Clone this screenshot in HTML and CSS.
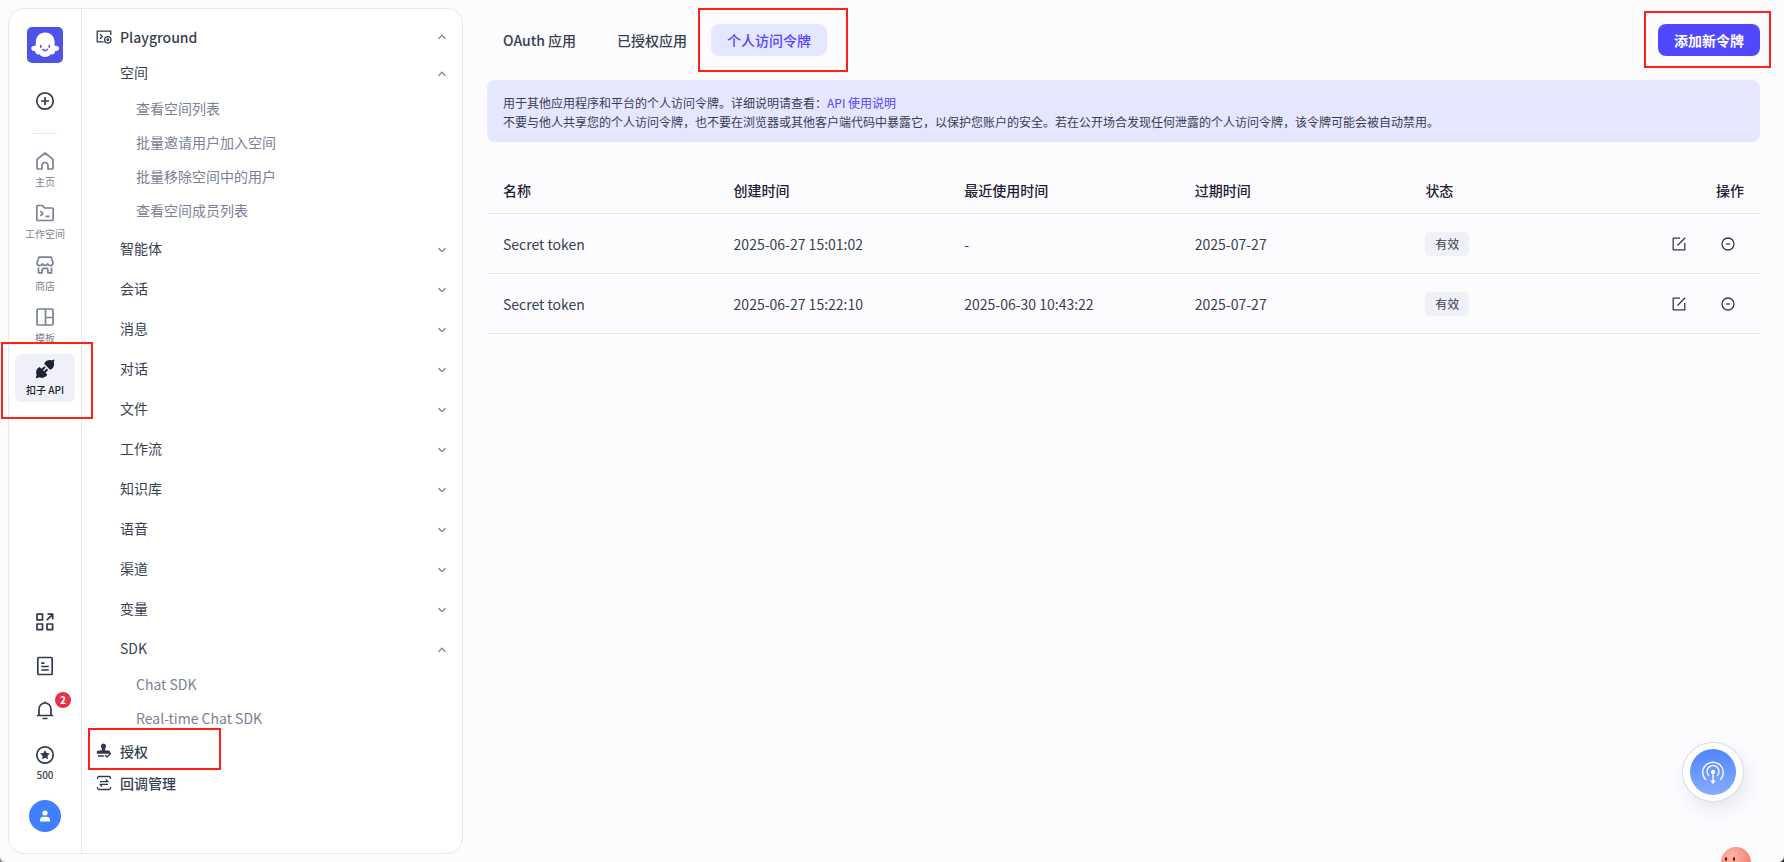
FILE: index.html
```
<!DOCTYPE html>
<html lang="zh-CN">
<head>
    <meta charset="UTF-8">
    <title>扣子 API</title>
    <link rel="stylesheet" href="styles.css">
</head>
<body>
    <svg class="defs" width="0" height="0">
        <symbol id="down" viewBox="0 0 10 10"><path d="M1.500 3.200 5 6.600l3.500-3.400"/></symbol>
        <symbol id="up" viewBox="0 0 10 10"><path d="M1.500 6.800 5 3.200l3.500 3.600"/></symbol>
        <symbol id="edit" viewBox="0 0 16 16"><path d="M9 2.200H2.200v11.600h11.600V7M6.500 9.500l7.700-7.700"/></symbol>
        <symbol id="minus" viewBox="0 0 16 16"><circle cx="8" cy="8" r="6"/><path d="M6 8h4"/></symbol>
    </svg>

    <div class="page">
        <aside class="side">
            <nav class="rail">
                <svg class="logo" viewBox="0 0 36 36">
                    <rect width="36" height="36" rx="5" fill="#4d53e8"/>
                    <path d="M18.200 5.500c-5.400 0-9.400 4-9.400 9.500v3.800c-2.300-.6-4.600.4-4.600 2.400 0 1.900 2 3 4 2.900-.2 2.600 2.200 4.200 4.600 3.200 1 3.700 9.400 3.700 10.600 0 2.400 1 4.900-.6 4.700-3.200 2 .1 4-1 4-2.900 0-2-2.200-3-4.500-2.400V15c0-5.500-4-9.500-9.400-9.500z" fill="#fff"/>
                    <path d="M13.800 18.500v1.700M22.300 18.500v1.700M15.800 22.300c1 1.600 3.500 1.600 4.500 0" fill="none" stroke="#4d53e8" stroke-width="1.500" stroke-linecap="round"/>
                </svg>
                <svg class="icon dark add" viewBox="0 0 20 20"><circle cx="10" cy="10" r="8.200"/><path d="M10 6v8M6 10h8"/></svg>
                <div class="line"></div>

                <div class="nav">
                    <a class="nav-item">
                        <svg class="icon" viewBox="0 0 20 20"><path d="M2 8.300 10 2l8 6.300V17c0 .6-.4 1-1 1h-4v-3.500a3 3 0 0 0-6 0V18H3c-.6 0-1-.4-1-1z"/></svg>
                        <span>主页</span>
                    </a>
                    <a class="nav-item">
                        <svg class="icon" viewBox="0 0 20 20"><path d="M1.800 3.500c0-.6.4-1 1-1h4.700L9.500 5h7.700c.6 0 1 .4 1 1v10.500c0 .6-.4 1-1 1H2.800c-.6 0-1-.4-1-1zM5.300 8.200 8 10.600l-2.700 2.300M10.500 13.300h4"/></svg>
                        <span>工作空间</span>
                    </a>
                    <a class="nav-item">
                        <svg class="icon" viewBox="0 0 20 20"><path d="M4 2.200h12l2 5.300c0 3.800-4.300 4-5.300 1.200-.8 2.300-4.600 2.300-5.400 0C6.300 11.500 2 11.300 2 7.500zM3.500 12.500v5.300h3.600V15c0-1 .7-1.600 1.500-1.600h2.800c.8 0 1.500.6 1.500 1.600v2.800h3.600v-5.300"/></svg>
                        <span>商店</span>
                    </a>
                    <a class="nav-item">
                        <svg class="icon" viewBox="0 0 20 20"><rect x="2" y="2" width="16" height="16" rx="1.200"/><path d="M10.500 2v16M10.500 10.500H18"/></svg>
                        <span>模板</span>
                    </a>
                    <a class="nav-item active">
                        <svg class="icon solid" viewBox="0 0 20 20"><path d="M9.200 4.800c1.600-4 5.800-4.200 7.500-3.400l2.200-.8.500.6-.7 2c1 2.200.3 6.200-3.700 7.600zM4.500 8l2 1.800 2.800-2.600 1.400 1.400-2.700 2.700 1 1 2.700-2.700 1.400 1.400-2.600 2.800 1.800 1.900c-1.800 3-5.800 3.800-8 2.600L1.700 19.300l-1-.8 1.100-2.400C.2 13.300 1.500 9.500 4.500 8z"/></svg>
                        <span>扣子 API</span>
                    </a>
                </div>

                <div class="tools">
                    <svg class="icon dark" viewBox="0 0 20 20"><path d="M2 2.200h5.500v5.600H2zM2 12h5.500v5.600H2zM12 12h5.600v5.600H12zM11.800 8.200l5.500-5.500M12.500 2.200h5.200v5.200"/></svg>
                    <svg class="icon dark" viewBox="0 0 20 20"><rect x="2.800" y="1.500" width="14.400" height="17" rx="1"/><path d="M6.200 7.200h3.300M6.200 10.500h7.600M6.200 14h7.600"/></svg>
                    <div class="bell">
                        <svg class="icon dark" viewBox="0 0 20 20"><path d="M1.800 15.500h16.400M4 15.500V9a6 6 0 0 1 12 0v6.500M10 1.500V3M7.500 18.500h5"/></svg>
                        <span class="badge">2</span>
                    </div>
                    <div class="score">
                        <svg class="icon dark" viewBox="0 0 20 20"><circle cx="10" cy="10" r="8.200"/><path class="fill" d="m10 5 1.500 3 3.400.5-2.500 2.400.6 3.400-3-1.600-3 1.600.6-3.400-2.500-2.400 3.400-.5z"/></svg>
                        <span>500</span>
                    </div>
                    <div class="avatar">
                        <svg viewBox="0 0 12 12" width="12" height="12"><circle cx="6" cy="3" r="2.600"/><path d="M1 11.500V10c0-2 1.300-3.300 3-3.300h4c1.700 0 3 1.300 3 3.300v1.500z"/></svg>
                    </div>
                </div>
            </nav>

            <div class="menu">
                <div class="top first">
                    <svg class="menu-icon" viewBox="0 0 16 16"><path d="M7.500 12.800H1.200V2.200h13.600V6M4 5.200 6.300 7.500 4 9.800"/><circle cx="11.800" cy="10.800" r="3.200"/><circle cx="11.800" cy="10.800" r=".8"/></svg>
                    <span>Playground</span>
                    <svg class="arrow"><use href="#up"/></svg>
                </div>
                <div class="group open"><span>空间</span><svg class="arrow"><use href="#up"/></svg></div>
                <div class="sub">
                    <a>查看空间列表</a>
                    <a>批量邀请用户加入空间</a>
                    <a>批量移除空间中的用户</a>
                    <a>查看空间成员列表</a>
                </div>
                <div class="group"><span>智能体</span><svg class="arrow"><use href="#down"/></svg></div>
                <div class="group"><span>会话</span><svg class="arrow"><use href="#down"/></svg></div>
                <div class="group"><span>消息</span><svg class="arrow"><use href="#down"/></svg></div>
                <div class="group"><span>对话</span><svg class="arrow"><use href="#down"/></svg></div>
                <div class="group"><span>文件</span><svg class="arrow"><use href="#down"/></svg></div>
                <div class="group"><span>工作流</span><svg class="arrow"><use href="#down"/></svg></div>
                <div class="group"><span>知识库</span><svg class="arrow"><use href="#down"/></svg></div>
                <div class="group"><span>语音</span><svg class="arrow"><use href="#down"/></svg></div>
                <div class="group"><span>渠道</span><svg class="arrow"><use href="#down"/></svg></div>
                <div class="group"><span>变量</span><svg class="arrow"><use href="#down"/></svg></div>
                <div class="group open"><span>SDK</span><svg class="arrow"><use href="#up"/></svg></div>
                <div class="sub">
                    <a>Chat SDK</a>
                    <a>Real-time Chat SDK</a>
                </div>
                <div class="top">
                    <svg class="menu-icon" viewBox="0 0 16 16"><path class="fill" d="M7.500.5a2.700 2.700 0 0 1 2 4.400c-.7 1-.5 2 .2 2.600h2.800c1 0 1.800.8 1.800 1.800v1.400H.8V9.300c0-1 .8-1.800 1.800-1.800h2.700c.7-.6.900-1.600.2-2.600a2.700 2.700 0 0 1 2-4.400z"/><path d="M1.800 13h6M9 12l2 2 4-3.800"/></svg>
                    <span>授权</span>
                </div>
                <div class="top">
                    <svg class="menu-icon" viewBox="0 0 16 16"><path d="M1.500 4V3c0-.8.700-1.500 1.500-1.500h10c.8 0 1.500.7 1.500 1.500v1M1.500 12v1c0 .8.700 1.500 1.500 1.500h10c.8 0 1.500-.7 1.500-1.500v-1M4 6.700h8L9.800 4.500M12 9.300H4l2.200 2.200"/></svg>
                    <span>回调管理</span>
                </div>
            </div>
        </aside>

        <main class="main">
            <div class="head">
                <div class="tabs">
                    <a class="tab">OAuth 应用</a>
                    <a class="tab">已授权应用</a>
                    <a class="tab active">个人访问令牌</a>
                </div>
                <button class="btn">添加新令牌</button>
            </div>

            <div class="notice">
                用于其他应用程序和平台的个人访问令牌。详细说明请查看：<a>API 使用说明</a><br>
                不要与他人共享您的个人访问令牌，也不要在浏览器或其他客户端代码中暴露它，以保护您账户的安全。若在公开场合发现任何泄露的个人访问令牌，该令牌可能会被自动禁用。
            </div>

            <table class="table">
                <thead>
                    <tr>
                        <th>名称</th>
                        <th>创建时间</th>
                        <th>最近使用时间</th>
                        <th>过期时间</th>
                        <th>状态</th>
                        <th class="action">操作</th>
                    </tr>
                </thead>
                <tbody>
                    <tr>
                        <td>Secret token</td>
                        <td>2025-06-27 15:01:02</td>
                        <td>-</td>
                        <td>2025-07-27</td>
                        <td><span class="tag">有效</span></td>
                        <td class="action"><div class="ops"><svg><use href="#edit"/></svg><svg><use href="#minus"/></svg></div></td>
                    </tr>
                    <tr>
                        <td>Secret token</td>
                        <td>2025-06-27 15:22:10</td>
                        <td>2025-06-30 10:43:22</td>
                        <td>2025-07-27</td>
                        <td><span class="tag">有效</span></td>
                        <td class="action"><div class="ops"><svg><use href="#edit"/></svg><svg><use href="#minus"/></svg></div></td>
                    </tr>
                </tbody>
            </table>
        </main>
    </div>

    <!-- floating widgets -->
    <div class="float">
        <div class="float-inner">
            <svg viewBox="0 0 24 24" width="24" height="24"><path d="M5 20a10.300 10.300 0 1 1 14 0M8 16a6 6 0 1 1 8 0M12 12v10"/><circle cx="12" cy="12" r="2.200"/><path class="tip" d="M9 20.500h6L12 24z"/></svg>
        </div>
    </div>
    <svg class="pet" viewBox="0 0 30 15">
        <defs><radialGradient id="skin" cx=".35" cy=".3" r=".8"><stop offset="0" stop-color="#ffb5a5"/><stop offset="1" stop-color="#f27a6c"/></radialGradient></defs>
        <circle cx="15" cy="15" r="15" fill="url(#skin)"/>
        <ellipse cx="5" cy="12" rx="1" ry="2" fill="#222"/><ellipse cx="13" cy="12" rx="1" ry="2" fill="#222"/>
    </svg>
    <svg class="corner left" viewBox="0 0 8 8"><path d="M0 0v8h8Q0 8 0 0z" fill="#888"/></svg>
    <svg class="corner right" viewBox="0 0 8 8"><path d="M8 0v8H0Q8 8 8 0z" fill="#222"/></svg>

    <!-- red marks -->
    <div class="mark mark-api"></div>
    <div class="mark mark-auth"></div>
    <div class="mark mark-tab"></div>
    <div class="mark mark-btn"></div>
</body>
</html>
```
FILE: styles.css
```
* {
    box-sizing: border-box;
}

body {
    margin: 0;
    height: 100vh;
    overflow: hidden;
    background-color: #fcfcff;
    color: #383f50;
    font-family: "Noto Sans CJK SC", "Noto Sans", sans-serif;
    font-size: 14px;
    line-height: 20px;
}

svg {
    display: block;
    fill: none;
    stroke-linejoin: round;
}

.defs {
    position: absolute;
}

.page {
    display: flex;
    height: 100vh;
    padding: 8px 24px 8px 8px;
    gap: 24px;
}

/* sidebar */
.side {
    display: flex;
    width: 455px;
    border: 1px solid #e7e7f0;
    border-radius: 16px;
    background-color: #fff;
    flex-shrink: 0;
}

.rail {
    display: flex;
    flex-direction: column;
    align-items: center;
    width: 73px;
    padding: 18px 0 21px;
    border-right: 1px solid #e7e7f0;
}

.logo {
    width: 36px;
    height: 36px;
}

.icon {
    width: 20px;
    height: 20px;
    stroke: #7b8194;
    stroke-width: 1.7;
    flex-shrink: 0;
}

.icon.dark {
    stroke: #33394a;
}

.icon .fill,
.menu-icon .fill {
    fill: #33394a;
    stroke: none;
}

.icon.solid {
    fill: #1c2233;
    stroke: none;
}

.add {
    margin-top: 28px;
}

.line {
    width: 24px;
    height: 1px;
    margin: 22px 0 12px;
    background-color: #e7e7ec;
}

.nav {
    display: flex;
    flex-direction: column;
    gap: 4px;
}

.nav-item {
    display: flex;
    flex-direction: column;
    align-items: center;
    width: 60px;
    height: 48px;
    padding-top: 5px;
    border-radius: 6px;
    color: #7b8194;
    font-size: 10px;
    line-height: 14px;
}

.nav-item span {
    margin-top: 4px;
}

.nav-item.active {
    background-color: #f0f1f8;
    color: #1c2233;
    font-weight: 500;
}

.tools {
    display: flex;
    flex-direction: column;
    align-items: center;
    gap: 24px;
    margin-top: auto;
}

.bell {
    position: relative;
}

.badge {
    position: absolute;
    left: 20px;
    top: -8px;
    width: 16px;
    height: 16px;
    border-radius: 50%;
    background-color: #e5324a;
    color: #fff;
    font-size: 10px;
    font-weight: 700;
    line-height: 16px;
    text-align: center;
}

.score {
    display: flex;
    flex-direction: column;
    align-items: center;
    gap: 3px;
    margin-top: 1px;
    padding-bottom: 1px;
    font-size: 10px;
    font-weight: 500;
    line-height: 13px;
}

.avatar {
    display: flex;
    align-items: center;
    justify-content: center;
    width: 32px;
    height: 32px;
    margin-top: -6px;
    border-radius: 50%;
    background-color: #4080ff;
}

.avatar svg {
    fill: #fff;
}

/* menu */
.menu {
    flex: 1;
    padding: 12px 15px 0 14px;
}

.top,
.group {
    display: flex;
    align-items: center;
}

.top {
    height: 32px;
    gap: 8px;
    font-weight: 500;
}

.top.first {
    height: 31px;
}

.menu-icon {
    width: 16px;
    height: 16px;
    stroke: #33394a;
    stroke-width: 1.3;
}

.group {
    height: 40px;
    padding-left: 24px;
}

.arrow {
    width: 10px;
    height: 10px;
    margin-left: auto;
    stroke: #6e7588;
    stroke-width: 1.2;
}

.group .arrow {
    margin-top: 4px;
}

.group.open .arrow {
    margin-top: 3px;
}

.sub {
    margin: -1px 0 1px;
}

.sub a {
    display: block;
    height: 34px;
    padding-left: 40px;
    color: #7b8194;
    line-height: 34px;
}

.sub + .top {
    margin-top: -1px;
}

/* content */
.main {
    flex: 1;
    padding-top: 16px;
}

.head {
    display: flex;
    justify-content: space-between;
}

.tabs {
    display: flex;
    gap: 8px;
}

.tab,
.btn {
    height: 32px;
    padding: 0 16px;
    border-radius: 8px;
    font-weight: 500;
    line-height: 32px;
}

.tab {
    min-width: 102px;
}

.tab:first-child {
    min-width: 106px;
}

.tab.active {
    background-color: #e5e6ff;
    color: #5147ff;
}

.btn {
    border: none;
    background-color: #5147ff;
    color: #fff;
    font-family: inherit;
    font-size: 14px;
    font-weight: 700;
}

.notice {
    height: 62px;
    margin-top: 24px;
    padding: 13px 16px 11px;
    border-radius: 8px;
    background-color: #e5e6ff;
    font-size: 12px;
    line-height: 19px;
}

.notice a {
    color: #5147ff;
}

.table {
    width: 100%;
    margin-top: 28px;
    border-collapse: separate;
    border-spacing: 0;
    table-layout: fixed;
}

.table th,
.table td {
    padding: 0 16px;
    border-bottom: 1px solid #e6e7ee;
    text-align: left;
}

.table th {
    height: 44px;
    padding-bottom: 4px;
    color: #1c2233;
    font-weight: 500;
}

.table td {
    height: 60px;
}

.table .action {
    width: 120px;
    text-align: right;
}

.tag {
    display: block;
    width: 44px;
    height: 24px;
    border-radius: 5px;
    background-color: #f0f0f8;
    font-size: 12px;
    line-height: 24px;
    text-align: center;
}

.ops {
    display: flex;
    justify-content: flex-end;
    gap: 33px;
    padding-right: 8px;
}

.ops svg {
    width: 16px;
    height: 16px;
    stroke: #33394a;
    stroke-width: 1.3;
}

.float {
    position: absolute;
    left: 1682px;
    top: 742px;
    display: flex;
    align-items: center;
    justify-content: center;
    width: 62px;
    height: 60px;
    border: 1px solid #dcdce6;
    border-radius: 50%;
    background-color: #fff;
    box-shadow: 4px 8px 16px rgba(60, 50, 120, 0.1);
}

.float-inner {
    display: flex;
    align-items: center;
    justify-content: center;
    width: 46px;
    height: 46px;
    border-radius: 50%;
    background: linear-gradient(#4f86fb, #86acff);
}

.float-inner svg {
    stroke: #eef3ff;
    stroke-width: 1.5;
}

.float-inner circle,
.float-inner .tip {
    fill: #fff;
    stroke: none;
}

.pet {
    position: absolute;
    left: 1721px;
    bottom: 0;
    width: 30px;
    height: 15px;
}

.corner {
    position: absolute;
    bottom: 0;
    width: 6px;
    height: 6px;
}

.corner.left {
    left: 0;
}

.corner.right {
    right: 0;
}

.mark {
    position: absolute;
    border: 2px solid #ff1f14;
}

.mark-api {
    left: 1px;
    top: 342px;
    width: 92px;
    height: 77px;
}

.mark-auth {
    left: 88px;
    top: 728px;
    width: 133px;
    height: 42px;
}

.mark-tab {
    left: 698px;
    top: 8px;
    width: 150px;
    height: 64px;
}

.mark-btn {
    left: 1644px;
    top: 11px;
    width: 127px;
    height: 57px;
}
```
